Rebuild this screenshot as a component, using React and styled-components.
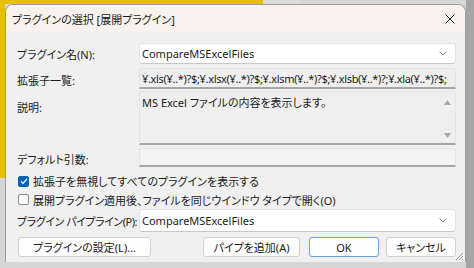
import React from 'react';
import styled, { createGlobalStyle } from 'styled-components';

const GlobalStyle = createGlobalStyle`
  html, body { margin: 0; padding: 0; }
  body {
    font-family: "Noto Sans", "Noto Sans CJK JP", sans-serif;
    font-size: 11px;
    font-feature-settings: "palt";
    color: #1b1b1b;
  }
`;

const Desktop = styled.div`
  width: 474px;
  height: 268px;
  overflow: hidden;
  padding: 4px 0 0 5px;
  box-sizing: border-box;
  background:
    linear-gradient(#e7bf06, #e7bf06) 0 0 / 263px 4px no-repeat,
    linear-gradient(#dcdcdc, #dcdcdc) 263px 0 / 38px 4px no-repeat,
    linear-gradient(#e7bf06, #e7bf06) 0 0 / 5px 178px no-repeat,
    linear-gradient(#a5a5a5, #a5a5a5) 466px 0 / 8px 268px no-repeat,
    #d6d6d6;
`;

const Window = styled.div`
  width: 461px;
  height: 258px;
  background: #f0f0f0;
  border: 1px solid #9c9c9c;
  border-bottom: none;
  border-radius: 8px 8px 0 0;
  box-sizing: border-box;
  overflow: hidden;
  position: relative;
  display: flex;
  flex-direction: column;
`;

const TitleBar = styled.div`
  height: 27px;
  background: #f7f3ec;
  display: flex;
  align-items: center;
  justify-content: space-between;
  padding: 0 10px 0 6px;
  color: #1a1a1a;
`;

const Body = styled.div`
  display: flex;
  flex-direction: column;
  padding: 0 9px 0 11px;
`;

const Row = styled.div`
  display: grid;
  grid-template-columns: 122px 1fr;
  height: ${p => p.$h}px;
  margin-top: ${p => p.$mt || 0}px;
`;

const Label = styled.div`
  display: flex;
  align-items: ${p => (p.$top ? 'flex-start' : 'center')};
  padding-top: ${p => p.$pt || 0}px;
  letter-spacing: ${p => (p.$tight ? '-0.45px' : 'normal')};
  white-space: nowrap;
`;

const Combo = styled.div`
  background: #ffffff;
  border: 1px solid #e3e3e3;
  border-bottom-color: #c8c8c8;
  border-radius: 3px;
  display: flex;
  align-items: center;
  justify-content: space-between;
  padding: 0 8px 0 2px;
`;

const ReadOnly = styled.div`
  background: ${p => p.$bg || '#efefef'};
  border: 1px solid #e4e4e4;
  border-bottom: 2px solid #a6a6a6;
  border-radius: 3px 3px 0 0;
  display: flex;
  align-items: ${p => (p.$top ? 'flex-start' : 'center')};
  justify-content: space-between;
  padding: ${p => (p.$top ? '2px 4px 0 2px' : '0 0 0 2px')};
  letter-spacing: ${p => (p.$tight ? '-0.32px' : 'normal')};
  overflow: hidden;
  white-space: nowrap;
`;

const Scroll = styled.div`
  height: 100%;
  display: flex;
  flex-direction: column;
  justify-content: space-between;
  padding: 6px 0 5px;
  box-sizing: border-box;
`;

const CheckRow = styled.label`
  display: flex;
  align-items: center;
  gap: 4px;
  height: ${p => p.$h}px;
  margin-top: ${p => p.$mt || 0}px;
  padding-left: 1px;
`;

const Box = styled.span`
  width: 11px;
  height: 11px;
  border-radius: 2px;
  box-sizing: border-box;
  display: flex;
  align-items: center;
  justify-content: center;
  background: ${p => (p.$on ? '#0a63b8' : '#fbfbfb')};
  border: 1px solid ${p => (p.$on ? '#0a63b8' : '#8a8a8a')};
`;

const Buttons = styled.div`
  display: flex;
  align-items: center;
  height: 20px;
  margin-top: 5px;
  padding-left: 1px;
`;

const Button = styled.button`
  font: inherit;
  font-feature-settings: "palt";
  color: #1b1b1b;
  width: ${p => p.$w}px;
  height: 20px;
  margin-left: ${p => p.$ml || 0}px;
  background: #fdfdfd;
  border: 1px solid ${p => (p.$primary ? '#6aa3d8' : '#d2d2d2')};
  border-radius: 3px;
  padding: 0;
  display: flex;
  align-items: center;
  justify-content: center;
`;

const Grip = styled.svg`
  position: absolute;
  right: 1px;
  bottom: 1px;
`;

const Chevron = () => (
  <svg width="8" height="5" viewBox="0 0 8 5">
    <path d="M0.5 0.5 L4 4 L7.5 0.5" fill="none" stroke="#8a8a8a" strokeWidth="1" />
  </svg>
);

const Tri = ({ up }) => (
  <svg width="7" height="5" viewBox="0 0 7 5">
    <path d={up ? 'M0 5 L3.5 0 L7 5 Z' : 'M0 0 L3.5 5 L7 0 Z'} fill="#a8a8a8" />
  </svg>
);

export default function App() {
  return (
    <>
      <GlobalStyle />
      <Desktop>
        <Window>
          <TitleBar>
            <span>プラグインの選択 [展開プラグイン]</span>
            <svg width="10" height="10" viewBox="0 0 10 10">
              <path d="M0.5 0.5 L9.5 9.5 M9.5 0.5 L0.5 9.5" stroke="#222" strokeWidth="1" />
            </svg>
          </TitleBar>
          <Body>
            <Row $h={21} $mt={11}>
              <Label>プラグイン名(N):</Label>
              <Combo>
                <span>CompareMSExcelFiles</span>
                <Chevron />
              </Combo>
            </Row>
            <Row $h={21} $mt={4}>
              <Label $pt={3}>拡張子一覧:</Label>
              <ReadOnly $tight>
                <span>¥.xls(¥..*)?$;¥.xlsx(¥..*)?$;¥.xlsm(¥..*)?$;¥.xlsb(¥..*)?;¥.xla(¥..*)?$;</span>
              </ReadOnly>
            </Row>
            <Row $h={54} $mt={2}>
              <Label $top $pt={8}>説明:</Label>
              <ReadOnly $top>
                <span>MS Excel ファイルの内容を表示します。</span>
                <Scroll>
                  <Tri up />
                  <Tri />
                </Scroll>
              </ReadOnly>
            </Row>
            <Row $h={19} $mt={3}>
              <Label $pt={3}>デフォルト引数:</Label>
              <ReadOnly $bg="#f3f3f3" />
            </Row>
            <CheckRow $h={18} $mt={5}>
              <Box $on>
                <svg width="8" height="7" viewBox="0 0 8 7">
                  <path d="M1 3.5 L3 5.5 L7 1" fill="none" stroke="#fff" strokeWidth="1.2" />
                </svg>
              </Box>
              <span>拡張子を無視してすべてのプラグインを表示する</span>
            </CheckRow>
            <CheckRow $h={19}>
              <Box />
              <span>展開プラグイン適用後、ファイルを同じウインドウ タイプで開く(O)</span>
            </CheckRow>
            <Row $h={23}>
              <Label $tight>プラグイン パイプライン(P):</Label>
              <Combo>
                <span>CompareMSExcelFiles</span>
                <Chevron />
              </Combo>
            </Row>
            <Buttons>
              <Button $w={135}>プラグインの設定(L)...</Button>
              <Button $w={98} $ml={52}>パイプを追加(A)</Button>
              <Button $w={71} $ml={9} $primary>OK</Button>
              <Button $w={71} $ml={7}>キャンセル</Button>
            </Buttons>
          </Body>
          <Grip width="10" height="10" viewBox="0 0 10 10">
            <path d="M9 2 L2 9 M9 5 L5 9 M9 8 L8 9" stroke="#9a9a9a" strokeWidth="1" />
          </Grip>
        </Window>
      </Desktop>
    </>
  );
}
